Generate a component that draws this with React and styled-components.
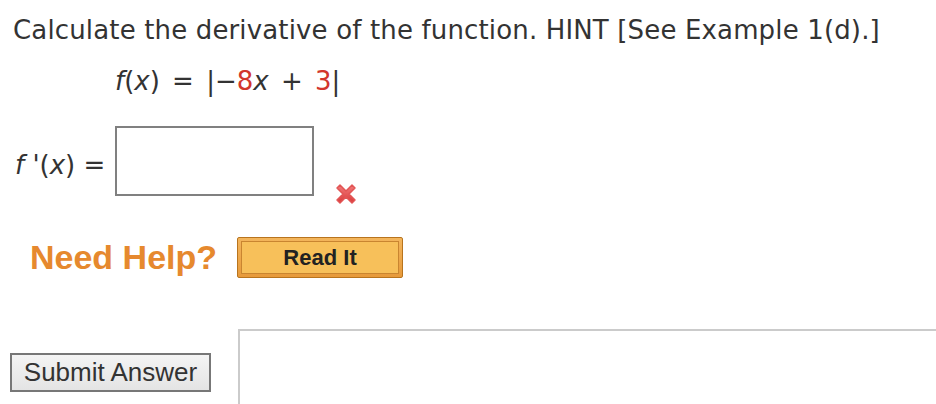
import React from "react";
import styled, { createGlobalStyle } from "styled-components";

const GlobalStyle = createGlobalStyle`
  html, body {
    margin: 0;
    padding: 0;
    background: #fff;
  }
`;

const App = () => {
  return (
    <>
      <GlobalStyle />
      <Page>
        <Prompt>Calculate the derivative of the function. HINT [See Example 1(d).]</Prompt>
        <Equation>
          <i>f</i>(<i>x</i>) = |−<Red>8</Red>
          <i>x</i> + <Red>3</Red>|
        </Equation>
        <AnswerRow>
          <Label>
            <i>f</i> '(<i>x</i>) =
          </Label>
          <AnswerInput type="text" />
          <WrongMark viewBox="0 0 26 26" aria-hidden="true">
            <defs>
              <linearGradient id="xg" x1="0" y1="0" x2="0" y2="1">
                <stop offset="0" stopColor="#f27a7a" />
                <stop offset="1" stopColor="#d93a3a" />
              </linearGradient>
            </defs>
            <path
              d="M4 7 L7 4 L13 10 L19 4 L22 7 L16 13 L22 19 L19 22 L13 16 L7 22 L4 19 L10 13 Z"
              fill="url(#xg)"
              stroke="#e25555"
              strokeWidth="1.5"
              strokeLinejoin="round"
            />
          </WrongMark>
        </AnswerRow>
        <HelpRow>
          <HelpText>Need Help?</HelpText>
          <ReadButton>
            <span>Read It</span>
          </ReadButton>
        </HelpRow>
        <SubmitRow>
          <SubmitButton>Submit Answer</SubmitButton>
          <ResultPanel />
        </SubmitRow>
      </Page>
    </>
  );
};

export default App;

const Page = styled.div`
  width: 936px;
  height: 404px;
  overflow: hidden;
  font-family: "DejaVu Sans", Verdana, sans-serif;
  color: #333;
`;

const Prompt = styled.p`
  margin: 0;
  padding: 14px 0 0 13px;
  font-size: 26px;
  letter-spacing: 0.15px;
  line-height: 32px;
  white-space: nowrap;
`;

const Equation = styled.div`
  margin-top: 19px;
  padding-left: 115px;
  font-size: 26px;
  line-height: 32px;
  word-spacing: 4px;
  i {
    font-style: italic;
  }
`;

const Red = styled.span`
  color: #d2362c;
`;

const AnswerRow = styled.div`
  display: flex;
  align-items: flex-start;
  margin-top: 29px;
  padding-left: 15px;
`;

const Label = styled.div`
  width: 100px;
  margin-top: 23px;
  font-size: 26px;
  line-height: 32px;
  white-space: nowrap;
  i {
    font-style: italic;
  }
`;

const AnswerInput = styled.input`
  box-sizing: border-box;
  width: 199px;
  height: 70px;
  margin: 0;
  border: 2px solid #808080;
  background: #fff;
  outline: none;
`;

const WrongMark = styled.svg`
  width: 26px;
  height: 26px;
  margin: 55px 0 0 19px;
`;

const HelpRow = styled.div`
  display: flex;
  align-items: center;
  gap: 20px;
  margin-top: 30px;
  padding-left: 30px;
`;

const HelpText = styled.span`
  font-family: "Liberation Sans", Arial, sans-serif;
  font-weight: bold;
  font-size: 34px;
  line-height: 41px;
  color: #e6892e;
`;

const ReadButton = styled.button`
  box-sizing: border-box;
  width: 166px;
  height: 41px;
  padding: 3px;
  border: 1px solid #b8741e;
  border-radius: 2px;
  background: linear-gradient(#f3b55c, #e79a3b);
  cursor: pointer;
  span {
    box-sizing: border-box;
    display: flex;
    align-items: center;
    justify-content: center;
    height: 100%;
    border: 1px solid #c98530;
    background: #f7c05a;
    font-family: "Liberation Sans", Arial, sans-serif;
    font-weight: bold;
    font-size: 22px;
    color: #222;
  }
`;

const SubmitRow = styled.div`
  display: flex;
  align-items: flex-start;
  gap: 27px;
  margin-top: 51px;
  padding-left: 10px;
`;

const SubmitButton = styled.button`
  box-sizing: border-box;
  width: 201px;
  height: 39px;
  margin-top: 24px;
  border: 2px solid #777;
  background: linear-gradient(#f4f4f4, #e4e4e4);
  font-family: "Liberation Sans", Arial, sans-serif;
  font-size: 26px;
  color: #333;
  padding: 0;
`;

const ResultPanel = styled.div`
  flex: 1;
  height: 120px;
  border-top: 2px solid #cbcbcb;
  border-left: 2px solid #cbcbcb;
`;
